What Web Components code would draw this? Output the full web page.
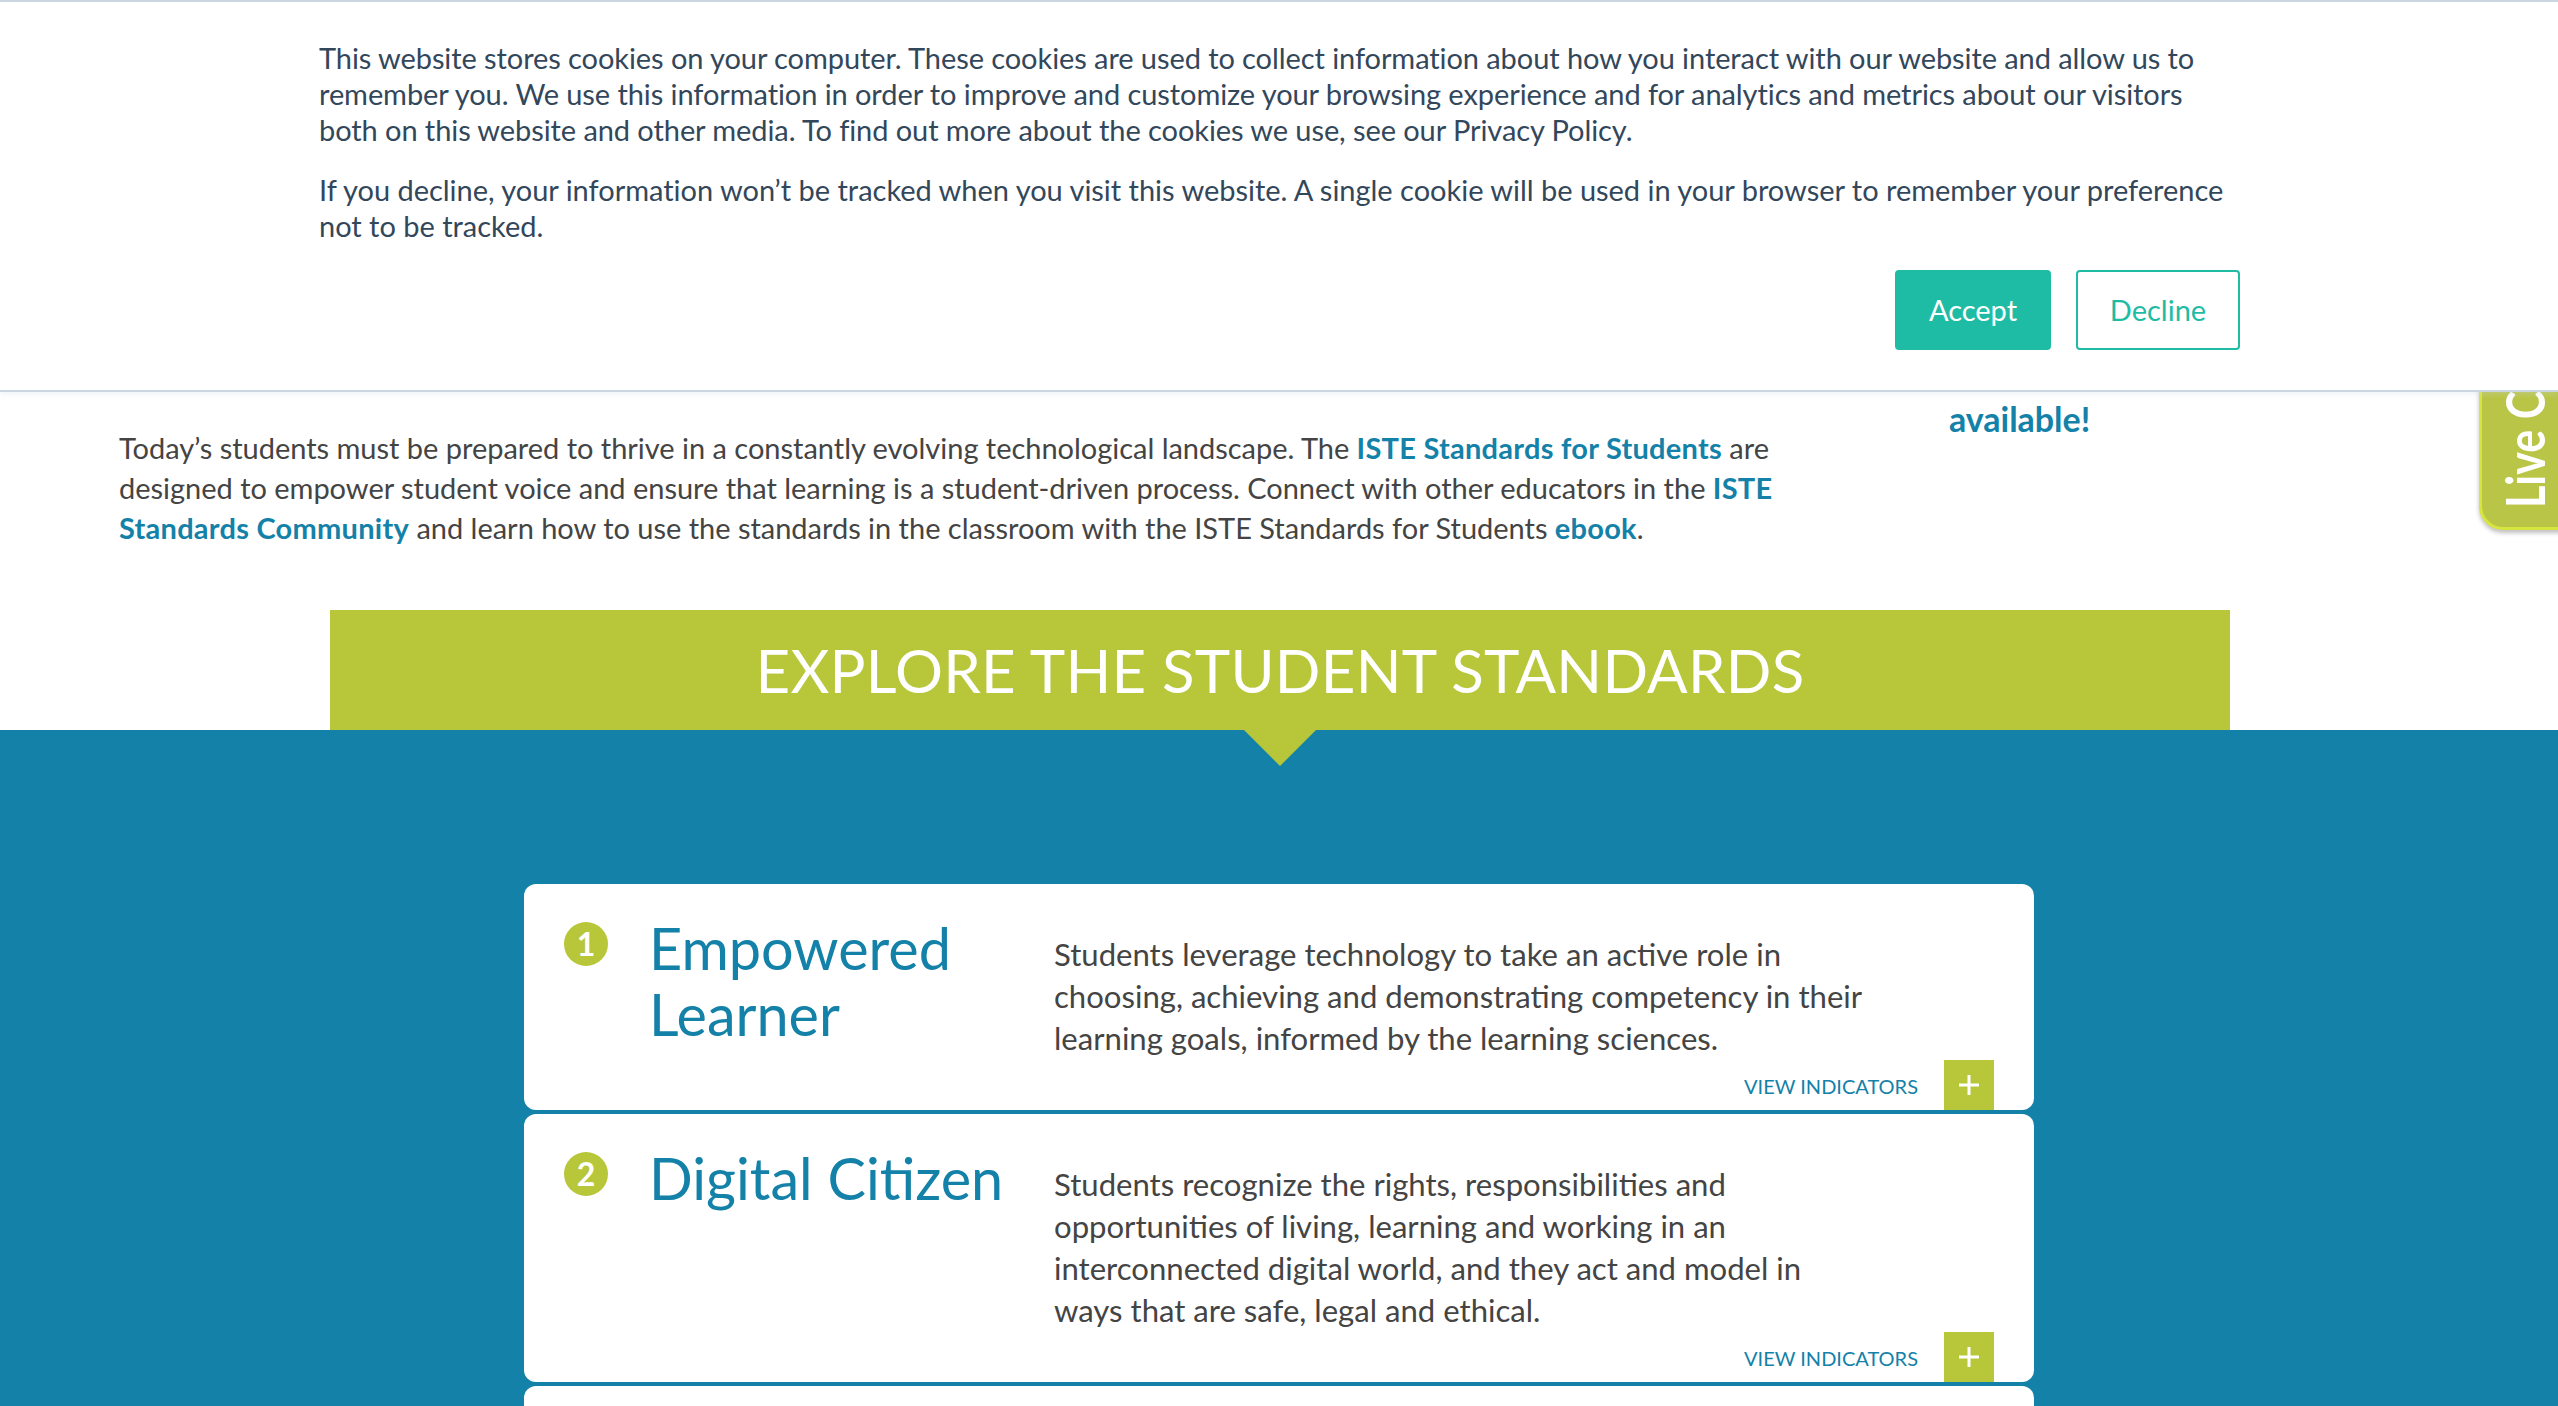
<!DOCTYPE html>
<html lang="en">
<head>
<meta charset="utf-8">
<title>ISTE Standards for Students</title>
<style>
  html, body { margin: 0; height: 1406px; overflow: hidden; background: #fff; }
  body { position: relative; font-family: Lato, "Open Sans", sans-serif; }
</style>
</head>
<body>
<cookie-banner>
  <p style="letter-spacing:-.08px">This website stores cookies on your computer. These cookies are used to collect information about how you interact with our website and allow us to remember you. We use this information in order to improve and customize your browsing experience and for analytics and metrics about our visitors both on this website and other media. To find out more about the cookies we use, see our Privacy Policy.</p>
  <p style="letter-spacing:-.02px">If you decline, your information won’t be tracked when you visit this website. A single cookie will be used in your browser to remember your preference not to be tracked.</p>
</cookie-banner>
<live-chat>Live Chat</live-chat>
<intro-section>
  Today’s students must be prepared to thrive in a constantly evolving technological landscape. The <a>ISTE Standards for Students</a> are designed to empower student voice and ensure that learning is a student-driven process. Connect with other educators in the <a>ISTE Standards Community</a> and learn how to use the standards in the classroom with the ISTE Standards for Students <a>ebook</a>.
  <span slot="aside">available!</span>
</intro-section>
<explore-band>EXPLORE THE STUDENT STANDARDS</explore-band>
<standards-list>
  <standard-card number="1" heading="Empowered Learner">Students leverage technology to take an active role in choosing, achieving and demonstrating competency in their learning goals, informed by the learning sciences.</standard-card>
  <standard-card number="2" heading="Digital Citizen">Students recognize the rights, responsibilities and opportunities of living, learning and working in an interconnected digital world, and they act and model in ways that are safe, legal and ethical.</standard-card>
  <div class="next"></div>
</standards-list>
<script>
class CookieBanner extends HTMLElement {
  constructor () {
    super()
    this.attachShadow({ mode: 'open' }).innerHTML = /* html */`
      <style>
        :host {
          position: absolute; top: 0; left: 0; right: 0; z-index: 5;
          box-sizing: border-box; height: 392px; padding: 38px 319px 0;
          background: #fff; color: #33475b;
          border-top: 2px solid #cbd6e2; border-bottom: 2px solid #cbd6e2;
          box-shadow: 0 2px 6px rgba(203, 214, 226, .35);
          font-size: 29px; line-height: 36px;
        }
        ::slotted(p) { margin: 0 0 24px; }
        .actions { display: flex; justify-content: flex-end; gap: 25px; padding-top: 2px; margin-right: -1px; }
        button {
          font: inherit; height: 80px; border-radius: 4px; border: 2px solid #1fbca5;
          font-size: 29px;
        }
        .accept { width: 156px; background: #1fbca5; color: #fff; }
        .decline { width: 164px; background: #fff; color: #1fbca5; }
      </style>
      <slot></slot>
      <div class="actions">
        <button class="accept">Accept</button>
        <button class="decline">Decline</button>
      </div>
    `
  }
}

class LiveChat extends HTMLElement {
  constructor () {
    super()
    this.attachShadow({ mode: 'open' }).innerHTML = /* html */`
      <style>
        :host {
          position: absolute; top: 340px; right: -30px; width: 109px; height: 190px; z-index: 2;
          box-sizing: border-box; background: #b9c546;
          border-left: 3px solid #d7e63f; border-bottom: 3px solid #d7e63f;
          border-radius: 0 0 0 24px; box-shadow: 0 3px 4px rgba(0, 0, 0, .25);
          overflow: hidden;
        }
        span {
          position: absolute; left: 15px; bottom: 19px;
          transform-origin: 0 100%; transform: rotate(-90deg) scaleY(1.25) translateY(100%);
          color: #fff; font: 700 43px/1 Lato, sans-serif; white-space: nowrap;
        }
      </style>
      <span><slot></slot></span>
    `
  }
}

class IntroSection extends HTMLElement {
  constructor () {
    super()
    this.attachShadow({ mode: 'open' }).innerHTML = /* html */`
      <style>
        :host {
          display: grid; grid-template-columns: 1670px 1fr; column-gap: 160px;
          box-sizing: border-box; height: 610px; padding: 428px 0 0 119px;
          color: #444; font-size: 29px; line-height: 40px; letter-spacing: -.02px;
        }
        ::slotted(a) { color: #1481a8; font-weight: 700; letter-spacing: .25px; }
        .aside {
          margin-top: -29px; color: #1481a8; font-size: 34px; font-weight: 700;
        }
      </style>
      <div><slot></slot></div>
      <div class="aside"><slot name="aside"></slot></div>
    `
  }
}

class ExploreBand extends HTMLElement {
  constructor () {
    super()
    this.attachShadow({ mode: 'open' }).innerHTML = /* html */`
      <style>
        :host {
          display: block; position: relative; z-index: 1; margin: 0 328px 0 330px; height: 120px;
          background: #b8c63a; color: #fff;
          font-size: 60px; line-height: 120px; text-align: center; letter-spacing: .25px;
        }
        :host::after {
          content: ""; position: absolute; left: 914px; top: 120px;
          border-top: 36px solid #b8c63a; border-left: 36px solid transparent; border-right: 36px solid transparent;
        }
      </style>
      <slot></slot>
    `
  }
}

class StandardsList extends HTMLElement {
  constructor () {
    super()
    this.attachShadow({ mode: 'open' }).innerHTML = /* html */`
      <style>
        :host {
          display: flex; flex-direction: column; gap: 4px;
          height: 676px; padding: 154px 524px 0; box-sizing: border-box;
          background: #1481a8; overflow: hidden;
        }
        ::slotted(.next) { flex: none; width: 1510px; height: 40px; background: #fff; border-radius: 12px 12px 0 0; }
      </style>
      <slot></slot>
    `
  }
}

class StandardCard extends HTMLElement {
  constructor () {
    super()
    const number = this.getAttribute('number')
    const heading = this.getAttribute('heading')
    this.attachShadow({ mode: 'open' }).innerHTML = /* html */`
      <style>
        :host {
          display: grid; grid-template-columns: 44px 446px 815px; grid-template-rows: 1fr auto;
          box-sizing: border-box; flex: none; width: 1510px; padding: 38px 40px 0;
          background: #fff; border-radius: 12px;
        }
        .num {
          width: 44px; height: 44px; border-radius: 50%; background: #b8c63a; color: #fff;
          display: flex; align-items: center; justify-content: center; font-size: 32px; font-weight: 700; line-height: 1;
        }
        h2 {
          margin: -7px 0 0 41px; font-weight: 400; font-size: 57.6px; line-height: 66px; color: #1481a8;
        }
        .desc { color: #444; font-size: 31.1px; line-height: 42px; padding-top: 11px; padding-bottom: 1px; }
        .more {
          grid-column: 1 / -1; display: flex; justify-content: flex-end; align-items: center; gap: 26px;
          margin-right: -125px; color: #1481a8; font-size: 20px;
        }
        .more span { padding-top: 2px; }
        .plus { width: 50px; height: 50px; background: #b8c63a; }
        svg { display: block; }
      </style>
      <div class="num">${number}</div>
      <h2>${heading}</h2>
      <div class="desc"><slot></slot></div>
      <div class="more"><span>VIEW INDICATORS</span>
        <div class="plus"><svg width="50" height="50" viewBox="0 0 50 50"><path d="M25 15v20M15 25h20" stroke="#fff" stroke-width="3" fill="none"/></svg></div>
      </div>
    `
  }
}

customElements.define('cookie-banner', CookieBanner)
customElements.define('live-chat', LiveChat)
customElements.define('intro-section', IntroSection)
customElements.define('explore-band', ExploreBand)
customElements.define('standards-list', StandardsList)
customElements.define('standard-card', StandardCard)
</script>
</body>
</html>
